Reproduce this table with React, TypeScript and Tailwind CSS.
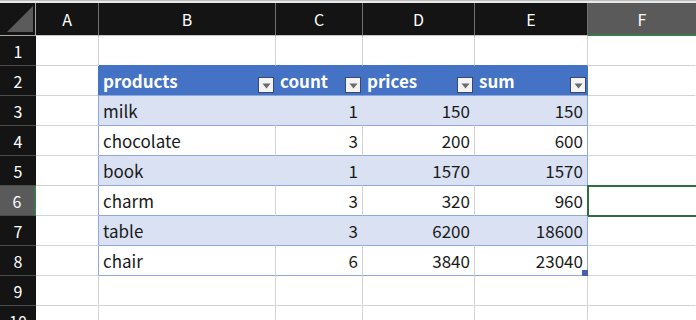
import React from "react";

const font = { fontFamily: '"Noto Sans CJK JP", "Noto Sans", sans-serif' };

const letters = ["A", "B", "C", "D", "E", "F"];
const heads = ["products", "count", "prices", "sum"];
const rows: [string, number, number, number][] = [
  ["milk", 1, 150, 150],
  ["chocolate", 3, 200, 600],
  ["book", 1, 1570, 1570],
  ["charm", 3, 320, 960],
  ["table", 3, 6200, 18600],
  ["chair", 6, 3840, 23040],
];

const FilterButton = () => (
  <div className="mb-[2px] mr-[1px] flex h-[16px] w-[16px] shrink-0 items-center justify-center self-end border border-[#3d4670] bg-[#f3f3f3]">
    <svg width="9" height="6" viewBox="0 0 9 6" className="mt-[2px]">
      <path d="M0.5 0.5 L8.5 0.5 L4.5 5.5 Z" fill="#6a6a6a" />
    </svg>
  </div>
);

const RowHead = ({ n, active }: { n: number; active?: boolean }) => (
  <div
    className={
      "flex h-[30px] items-center justify-center border-b border-[#4a4a4a] text-[16px] text-white " +
      (active ? "border-r-2 border-r-[#3b7a4c] bg-[#5a5a5a]" : "bg-[#141414]")
    }
  >
    {n}
  </div>
);

const Blank = ({ right = "border-r-[#d4d4d4]", bottom = "border-b-[#d4d4d4]" }: { right?: string; bottom?: string }) => (
  <div className={"h-[30px] border-b border-r bg-white " + right + " " + bottom} />
);

export default function App() {
  return (
    <div className="h-[320px] w-[696px] overflow-hidden bg-white" style={font}>
      <div className="h-[3px] border-t border-[#bdbdbd] bg-[#e9e9e9]" />
      <div className="grid grid-cols-[36px_63px_177px_87px_112px_113px_108px]">
        {/* column headers */}
        <div className="flex h-[33px] items-end justify-end border-b border-r border-[#a8a8a8] bg-[#141414] pb-[2px] pr-[1px]">
          <svg width="27" height="27" viewBox="0 0 27 27">
            <path d="M0 26 L26 0 L26 26 Z" fill="#5b5b5b" />
          </svg>
        </div>
        {letters.map((l) =>
          l === "F" ? (
            <div
              key={l}
              className="flex h-[33px] items-center justify-center border-b-2 border-[#3b7a4c] bg-[#5a5a5a] text-[16px] text-white"
            >
              {l}
            </div>
          ) : (
            <div
              key={l}
              className="flex h-[33px] items-center justify-center border-b border-r border-b-[#c8c8c8] border-r-[#707070] bg-[#141414] text-[16px] text-white"
            >
              {l}
            </div>
          )
        )}

        {/* row 1 */}
        <RowHead n={1} />
        <Blank />
        <Blank bottom="border-b-[#4472c4]" />
        <Blank bottom="border-b-[#4472c4]" />
        <Blank bottom="border-b-[#4472c4]" />
        <Blank bottom="border-b-[#4472c4]" />
        <Blank right="border-r-white" />

        {/* row 2: table header */}
        <RowHead n={2} />
        <Blank right="border-r-[#4472c4]" />
        {heads.map((h) => (
          <div
            key={h}
            className="flex h-[30px] border-b border-r border-b-[#8ea9db] border-r-[#4472c4] bg-[#4472c4] pl-[4px]"
          >
            <span className="flex-1 self-center text-[17px] font-bold leading-none text-white">{h}</span>
            <FilterButton />
          </div>
        ))}
        <Blank right="border-r-white" />

        {/* data rows */}
        {rows.map(([name, count, price, sum], i) => {
          const band = i % 2 === 0;
          const bg = band ? "bg-[#d9e1f2] border-r-[#d9e1f2]" : "bg-white border-r-[#d4d4d4]";
          const cell = "flex h-[30px] items-center border-b border-r border-b-[#8ea9db] text-[17px] text-[#1a1a1a] ";
          const last = i === rows.length - 1;
          return (
            <React.Fragment key={name}>
              <RowHead n={i + 3} active={i === 3} />
              <Blank right="border-r-[#8ea9db]" />
              <div className={cell + bg + " pl-[4px]"}>{name}</div>
              <div className={cell + bg + " justify-end pr-[4px]"}>{count}</div>
              <div className={cell + bg + " justify-end pr-[4px]"}>{price}</div>
              <div
                className={
                  cell +
                  (band ? "bg-[#d9e1f2]" : "bg-white") +
                  " relative justify-end border-r-[#8ea9db] pr-[4px]"
                }
              >
                {sum}
                {last && <div className="absolute bottom-[-1px] right-[-1px] h-[6px] w-[6px] bg-[#4a5db0]" />}
              </div>
              {i === 3 ? (
                <div className="relative h-[30px] border-b border-[#d4d4d4] bg-white">
                  <div className="absolute -top-[1px] -left-[1px] right-[-4px] bottom-[-2px] border-2 border-[#2f6e40]" />
                </div>
              ) : (
                <Blank right="border-r-white" />
              )}
            </React.Fragment>
          );
        })}

        {/* rows 9-10 */}
        {[9, 10].map((n) => (
          <React.Fragment key={n}>
            <RowHead n={n} />
            <Blank />
            <Blank />
            <Blank />
            <Blank />
            <Blank />
            <Blank right="border-r-white" />
          </React.Fragment>
        ))}
      </div>
    </div>
  );
}
